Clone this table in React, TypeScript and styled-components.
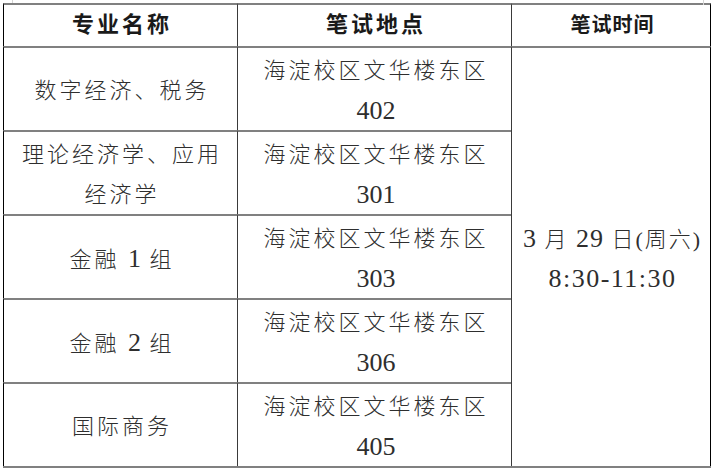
import { createGlobalStyle, styled } from 'styled-components';

const GlobalStyle = createGlobalStyle`
  html, body {
    margin: 0;
    padding: 0;
    background: #fff;
  }
  body {
    font-family: 'Liberation Serif', 'Noto Sans CJK SC', serif;
    color: #2e2e2e;
  }
  *, *::before, *::after {
    box-sizing: border-box;
  }
`;

const Sheet = styled.div`
  position: relative;
  width: 713px;
  height: 471px;
  padding: 3px 0 0 3px;
`;

// faint leftover ruler ticks above the table
const Tick = styled.span<{ $left: number; $h: number }>`
  position: absolute;
  top: 0;
  left: ${(p) => p.$left}px;
  width: 1px;
  height: ${(p) => p.$h}px;
  background: #d4d4d4;
`;

const Grid = styled.div`
  display: grid;
  width: 708px;
  grid-template-columns: 234px 274px 200px;
  grid-template-rows: 43px repeat(5, 84px);
  border-bottom: 2px solid #808080;
`;

const Cell = styled.div<{ $first?: boolean; $last?: boolean; $span?: number }>`
  display: flex;
  flex-direction: column;
  align-items: center;
  justify-content: center;
  text-align: center;
  border-top: 2px solid #808080;
  border-left: 1px solid ${(p) => (p.$first ? '#000' : '#3a3a3a')};
  border-right: ${(p) => (p.$last ? '1px solid #000' : 'none')};
  grid-row: ${(p) => (p.$span ? `span ${p.$span}` : 'auto')};
  font-size: 22px;
  font-weight: 300;
  line-height: 40px;
  letter-spacing: 3px;
  padding-left: 3px;
  padding-top: 4px;
`;

const HeadCell = styled(Cell)<{ $small?: boolean }>`
  font-weight: 700;
  color: #1a1a1a;
  font-size: ${(p) => (p.$small ? '20px' : '22px')};
  letter-spacing: ${(p) => (p.$small ? '1px' : '3px')};
  line-height: 30px;
  padding-top: 0;
  padding-bottom: 2px;
`;

const Line = styled.span`
  display: block;
  height: 40px;
`;

const Num = styled.span<{ $gap?: number }>`
  font-size: 26px;
  letter-spacing: ${(p) => p.$gap ?? 0}px;
  font-weight: 400;
`;

const TimeLine = styled(Line)`
  letter-spacing: 2px;
`;

const rows = [
  { name: [['数字经济、税务']], room: '402' },
  { name: [['理论经济学、应用'], ['经济学']], room: '301' },
  { name: [['金融 ', '1', ' 组']], room: '303' },
  { name: [['金融 ', '2', ' 组']], room: '306' },
  { name: [['国际商务']], room: '405' },
];

export default function App() {
  return (
    <>
      <GlobalStyle />
      <Sheet>
        <Tick $left={12} $h={3} />
        <Tick $left={703} $h={5} />
        <Grid>
          <HeadCell $first>专业名称</HeadCell>
          <HeadCell>笔试地点</HeadCell>
          <HeadCell $last $small>笔试时间</HeadCell>
          {rows.map((r, i) => (
            <>
              <Cell key={`n${i}`} $first>
                {r.name.map((parts, j) => (
                  <Line key={j}>
                    {parts.map((t, k) => (k === 1 ? <Num key={k}>{t}</Num> : t))}
                  </Line>
                ))}
              </Cell>
              <Cell key={`p${i}`}>
                <Line>海淀校区文华楼东区</Line>
                <Line>
                  <Num>{r.room}</Num>
                </Line>
              </Cell>
              {i === 0 && (
                <Cell key="time" $last $span={5}>
                  <TimeLine>
                    <Num $gap={1}>3</Num> 月 <Num $gap={1}>29</Num> 日(周六)
                  </TimeLine>
                  <TimeLine>
                    <Num $gap={1.5}>8:30-11:30</Num>
                  </TimeLine>
                </Cell>
              )}
            </>
          ))}
        </Grid>
      </Sheet>
    </>
  );
}
